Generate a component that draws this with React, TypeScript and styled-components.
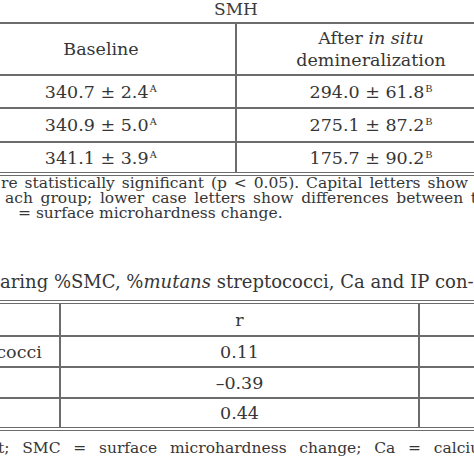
import styled, { createGlobalStyle } from 'styled-components';

const GlobalStyle = createGlobalStyle`
  html, body {
    margin: 0;
    padding: 0;
    background: #fff;
  }
  body {
    font-family: "DejaVu Serif", "Liberation Serif", serif;
    color: #363636;
  }
`;

const LINE = '#6c6c6c';

const Page = styled.div`
  width: 474px;
  height: 474px;
  overflow: hidden;
  background: #fff;
`;

const Table = styled.table<{ $shift: number; $width: number; $top: string }>`
  border-collapse: collapse;
  table-layout: fixed;
  margin-left: ${({ $shift }) => -$shift}px;
  width: ${({ $width }) => $width}px;
  font-size: 17.5px;
  border-top: ${({ $top }) => $top};
  border-bottom: 4px double ${LINE};
`;

const Col = styled.col<{ $w: number }>`
  width: ${({ $w }) => $w}px;
`;

const Row = styled.tr<{ $h: number }>`
  height: ${({ $h }) => $h}px;
`;

const Cell = styled.td<{ $align?: 'left' | 'center'; $pad?: number }>`
  border: 2px solid ${LINE};
  padding: 0 0 0 ${({ $pad }) => $pad ?? 0}px;
  text-align: ${({ $align }) => $align ?? 'center'};
  vertical-align: middle;
  line-height: 22px;
  white-space: nowrap;
`;

const TitleCell = styled.td`
  border-top: none;
  border-bottom: 2px solid ${LINE};
  padding: 0;
  text-align: center;
  vertical-align: top;
  font-size: 17px;
  line-height: 18px;
  color: #3c3c3c;
`;

const Sup = styled.sup`
  font-family: "Liberation Serif", serif;
  font-size: 10.5px;
  vertical-align: 6px;
  line-height: 0;
  margin-left: 1px;
`;

const Note = styled.div<{ $gap: number }>`
  margin-top: ${({ $gap }) => $gap}px;
  font-size: 15.5px;
  line-height: 15px;
`;

const NoteLine = styled.div<{ $indent: number; $width?: number }>`
  margin-left: ${({ $indent }) => $indent}px;
  width: ${({ $width }) => ($width ? `${$width}px` : 'auto')};
  text-align: ${({ $width }) => ($width ? 'justify' : 'left')};
  text-align-last: ${({ $width }) => ($width ? 'justify' : 'auto')};
  white-space: ${({ $width }) => ($width ? 'normal' : 'nowrap')};
`;

const Caption = styled.div`
  margin-top: 50px;
  font-size: 18px;
  line-height: 22px;
  white-space: nowrap;
`;

const Table2Wrap = styled.div`
  margin-top: 7px;
`;

const Em = styled.i`
  font-style: italic;
`;

const smh = [
  { a: '340.7 ± 2.4', sa: 'A', b: '294.0 ± 61.8', sb: 'B', h: 33 },
  { a: '340.9 ± 5.0', sa: 'A', b: '275.1 ± 87.2', sb: 'B', h: 34 },
  { a: '341.1 ± 3.9', sa: 'A', b: '175.7 ± 90.2', sb: 'B', h: 32 },
];

const corr = [
  ['%mutans streptococci', '0.11'],
  ['Ca', '–0.39'],
  ['IP', '0.44'],
];

export default function App() {
  return (
    <Page>
      <GlobalStyle />
      <Table $shift={35} $width={540} $top="hidden">
        <colgroup>
          <Col $w={270} />
          <Col $w={270} />
        </colgroup>
        <tbody>
          <Row $h={23}>
            <TitleCell colSpan={2}>SMH</TitleCell>
          </Row>
          <Row $h={52}>
            <Cell>Baseline</Cell>
            <Cell>
              After <Em>in situ</Em>
              <br />
              demineralization
            </Cell>
          </Row>
          {smh.map(({ a, sa, b, sb, h }) => (
            <Row $h={h} key={a}>
              <Cell>
                {a}
                <Sup>{sa}</Sup>
              </Cell>
              <Cell>
                {b}
                <Sup>{sb}</Sup>
              </Cell>
            </Row>
          ))}
        </tbody>
      </Table>

      <Note $gap={0}>
        <NoteLine $indent={1} $width={467}>
          re statistically significant (p &lt; 0.05). Capital letters show
        </NoteLine>
        <NoteLine $indent={5} $width={472}>
          ach group; lower case letters show differences between t
        </NoteLine>
        <NoteLine $indent={18}>= surface microhardness change.</NoteLine>
      </Note>

      <Caption>
        aring %SMC, %<Em>mutans</Em> streptococci, Ca and IP con-
      </Caption>

      <Table2Wrap>
        <Table $shift={163} $width={781} $top={`4px double ${LINE}`}>
          <colgroup>
            <Col $w={222} />
            <Col $w={359} />
            <Col $w={200} />
          </colgroup>
          <tbody>
            <Row $h={34}>
              <Cell />
              <Cell>r</Cell>
              <Cell />
            </Row>
            {corr.map(([label, r]) => (
              <Row $h={31} key={label}>
                <Cell $align="left" $pad={6}>
                  {label.startsWith('%') ? (
                    <>
                      %<Em>mutans</Em> streptococci
                    </>
                  ) : (
                    label
                  )}
                </Cell>
                <Cell>{r}</Cell>
                <Cell />
              </Row>
            ))}
          </tbody>
        </Table>
      </Table2Wrap>

      <Note $gap={10}>
        <NoteLine $indent={-2} $width={497}>
          t; SMC = surface microhardness change; Ca = calcium
        </NoteLine>
      </Note>
    </Page>
  );
}
